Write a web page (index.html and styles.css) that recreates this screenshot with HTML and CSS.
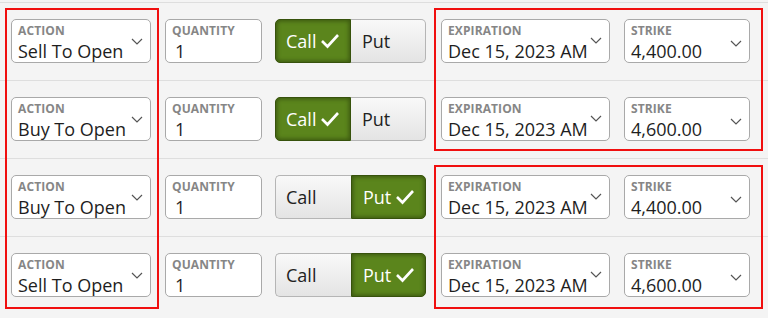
FILE: index.html
```html
<!DOCTYPE html>
<html>
<head>
  <link rel="stylesheet" href="styles.css">
</head>
<body>
  <div class="legs">
    <div class="leg">
      <div class="field action">
        <div class="label">ACTION</div>
        <div class="value">Sell To Open</div>
        <svg class="chev" width="12" height="7" viewBox="0 0 12 7"><path d="M1 1 L6 6 L11 1" /></svg>
      </div>
      <div class="field qty">
        <div class="label">QUANTITY</div>
        <div class="value">1</div>
      </div>
      <div class="toggle">
        <div class="opt on">Call <svg class="check" width="20" height="16" viewBox="0 0 20 16"><path d="M2 8 L7.5 13.5 L18 2" /></svg></div>
        <div class="opt">Put</div>
      </div>
      <div class="field expiry">
        <div class="label">EXPIRATION</div>
        <div class="value">Dec 15, 2023 AM</div>
        <svg class="chev" width="12" height="7" viewBox="0 0 12 7"><path d="M1 1 L6 6 L11 1" /></svg>
      </div>
      <div class="field strike">
        <div class="label">STRIKE</div>
        <div class="value">4,400.00</div>
        <svg class="chev" width="12" height="7" viewBox="0 0 12 7"><path d="M1 1 L6 6 L11 1" /></svg>
      </div>
    </div>

    <div class="leg">
      <div class="field action">
        <div class="label">ACTION</div>
        <div class="value">Buy To Open</div>
        <svg class="chev" width="12" height="7" viewBox="0 0 12 7"><path d="M1 1 L6 6 L11 1" /></svg>
      </div>
      <div class="field qty">
        <div class="label">QUANTITY</div>
        <div class="value">1</div>
      </div>
      <div class="toggle">
        <div class="opt on">Call <svg class="check" width="20" height="16" viewBox="0 0 20 16"><path d="M2 8 L7.5 13.5 L18 2" /></svg></div>
        <div class="opt">Put</div>
      </div>
      <div class="field expiry">
        <div class="label">EXPIRATION</div>
        <div class="value">Dec 15, 2023 AM</div>
        <svg class="chev" width="12" height="7" viewBox="0 0 12 7"><path d="M1 1 L6 6 L11 1" /></svg>
      </div>
      <div class="field strike">
        <div class="label">STRIKE</div>
        <div class="value">4,600.00</div>
        <svg class="chev" width="12" height="7" viewBox="0 0 12 7"><path d="M1 1 L6 6 L11 1" /></svg>
      </div>
    </div>

    <div class="leg">
      <div class="field action">
        <div class="label">ACTION</div>
        <div class="value">Buy To Open</div>
        <svg class="chev" width="12" height="7" viewBox="0 0 12 7"><path d="M1 1 L6 6 L11 1" /></svg>
      </div>
      <div class="field qty">
        <div class="label">QUANTITY</div>
        <div class="value">1</div>
      </div>
      <div class="toggle">
        <div class="opt">Call</div>
        <div class="opt on">Put <svg class="check" width="20" height="16" viewBox="0 0 20 16"><path d="M2 8 L7.5 13.5 L18 2" /></svg></div>
      </div>
      <div class="field expiry">
        <div class="label">EXPIRATION</div>
        <div class="value">Dec 15, 2023 AM</div>
        <svg class="chev" width="12" height="7" viewBox="0 0 12 7"><path d="M1 1 L6 6 L11 1" /></svg>
      </div>
      <div class="field strike">
        <div class="label">STRIKE</div>
        <div class="value">4,400.00</div>
        <svg class="chev" width="12" height="7" viewBox="0 0 12 7"><path d="M1 1 L6 6 L11 1" /></svg>
      </div>
    </div>

    <div class="leg">
      <div class="field action">
        <div class="label">ACTION</div>
        <div class="value">Sell To Open</div>
        <svg class="chev" width="12" height="7" viewBox="0 0 12 7"><path d="M1 1 L6 6 L11 1" /></svg>
      </div>
      <div class="field qty">
        <div class="label">QUANTITY</div>
        <div class="value">1</div>
      </div>
      <div class="toggle">
        <div class="opt">Call</div>
        <div class="opt on">Put <svg class="check" width="20" height="16" viewBox="0 0 20 16"><path d="M2 8 L7.5 13.5 L18 2" /></svg></div>
      </div>
      <div class="field expiry">
        <div class="label">EXPIRATION</div>
        <div class="value">Dec 15, 2023 AM</div>
        <svg class="chev" width="12" height="7" viewBox="0 0 12 7"><path d="M1 1 L6 6 L11 1" /></svg>
      </div>
      <div class="field strike">
        <div class="label">STRIKE</div>
        <div class="value">4,600.00</div>
        <svg class="chev" width="12" height="7" viewBox="0 0 12 7"><path d="M1 1 L6 6 L11 1" /></svg>
      </div>
    </div>
  </div>

  <!-- highlight boxes drawn over the rows -->
  <div class="mark mark-action"></div>
  <div class="mark mark-top"></div>
  <div class="mark mark-bottom"></div>
</body>
</html>
```

FILE: styles.css
```css
body {
  margin: 0;
  background-color: #f4f4f4;
  font-family: "Open Sans", "Noto Sans", sans-serif;
  color: #222;
  position: relative;
  height: 318px;
  overflow: hidden;
}

.legs {
  padding-top: 2px;
}

.leg {
  display: flex;
  align-items: center;
  border-top: 1px solid #dedede;
  padding: 16px 0 17px 11px;
  height: 44px;
}

.field {
  position: relative;
  box-sizing: border-box;
  height: 44px;
  background-color: #fff;
  border: 1px solid #a9a9a9;
  border-radius: 5px;
  padding: 4px 0 0 6px;
  margin-right: 14px;
}

.label {
  font-size: 12px;
  line-height: 13px;
  font-weight: 700;
  color: #868686;
  letter-spacing: 0.1px;
}

.value {
  margin-top: 4px;
  font-size: 18px;
  line-height: 20px;
  color: #1e1e1e;
}

.chev {
  position: absolute;
  right: 7px;
  top: 18px;
  fill: none;
  stroke: #555;
  stroke-width: 1.2;
}

.action { width: 140px; }
.qty { width: 97px; margin-right: 13px; }
.qty .value { padding-left: 3px; }
.expiry { width: 169px; }
.expiry .chev { right: 7px; top: 17px; }
.strike { width: 126px; }
.strike .chev { right: 7px; top: 20px; }

.toggle {
  display: flex;
  width: 151px;
  height: 44px;
  margin-right: 15px;
}

.opt {
  box-sizing: border-box;
  width: 76px;
  height: 44px;
  display: flex;
  align-items: center;
  padding-left: 10px;
  font-size: 18px;
  color: #222;
  border: 1px solid #b5b5b5;
  background: linear-gradient(#f9f9f9, #e4e4e4);
}
.opt:first-child {
  border-radius: 5px 0 0 5px;
  border-right: none;
}
.opt:last-child {
  border-radius: 0 5px 5px 0;
  border-left: none;
  width: 75px;
  padding-left: 11px;
}

.opt.on {
  color: #fff;
  background-color: #5b851c;
  background-image: none;
  border: 1px solid #37520c;
  box-shadow: inset 0 0 4px 1px #3a5610;
}

.check {
  margin-left: 4px;
  fill: none;
  stroke: #fff;
  stroke-width: 2.6;
}

.mark {
  position: absolute;
  border: 2px solid #f00f0f;
  box-sizing: border-box;
}
.mark-action { left: 5px; top: 8px; width: 154px; height: 301px; }
.mark-top { left: 434px; top: 8px; width: 329px; height: 143px; }
.mark-bottom { left: 434px; top: 165px; width: 329px; height: 144px; }
```
